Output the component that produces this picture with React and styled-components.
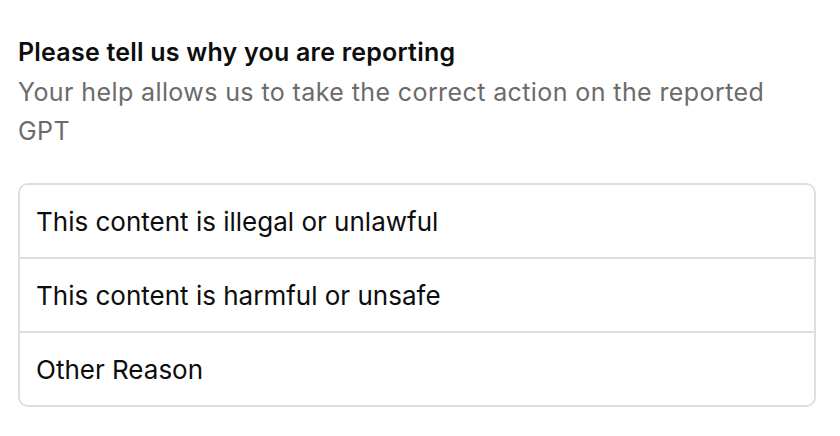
import React from "react";
import styled, { createGlobalStyle } from "styled-components";

const GlobalStyle = createGlobalStyle`
  * {
    box-sizing: border-box;
    margin: 0;
    padding: 0;
  }

  body {
    background: #ffffff;
    font-family: Inter, "Noto Sans", Arial, sans-serif;
    color: #0d0d0d;
  }
`;

const Wrapper = styled.div`
  padding: 38px 18px 0 18px;
  width: 834px;
`;

const Title = styled.h2`
  font-size: 25px;
  font-weight: 600;
  line-height: 28px;
  letter-spacing: 0.22px;
`;

const Subtitle = styled.p`
  margin-top: 7px;
  margin-bottom: 32px;
  max-width: 780px;
  font-size: 25px;
  line-height: 39px;
  letter-spacing: 0.4px;
  color: #6b6b6b;
`;

const ReasonList = styled.div`
  display: flex;
  flex-direction: column;
  border: 2px solid #dedede;
  border-radius: 10px;
  overflow: hidden;
`;

const Reason = styled.button`
  display: flex;
  align-items: center;
  height: ${(props) => (props.$last ? "72px" : "74px")};
  padding: 0 16px;
  border: none;
  border-bottom: ${(props) => (props.$last ? "none" : "2px solid #dedede")};
  background: #ffffff;
  font-family: inherit;
  font-size: 26px;
  color: #0d0d0d;
  text-align: left;
  cursor: pointer;

  &:hover {
    background: #f9f9f9;
  }
`;

const reasons = [
  "This content is illegal or unlawful",
  "This content is harmful or unsafe",
  "Other Reason",
];

function App() {
  return (
    <Wrapper>
      <GlobalStyle />
      <Title>Please tell us why you are reporting</Title>
      <Subtitle>
        Your help allows us to take the correct action on the reported GPT
      </Subtitle>
      <ReasonList>
        {reasons.map((r, i) => (
          <Reason key={r} $last={i === reasons.length - 1}>
            {r}
          </Reason>
        ))}
      </ReasonList>
    </Wrapper>
  );
}

export default App;
